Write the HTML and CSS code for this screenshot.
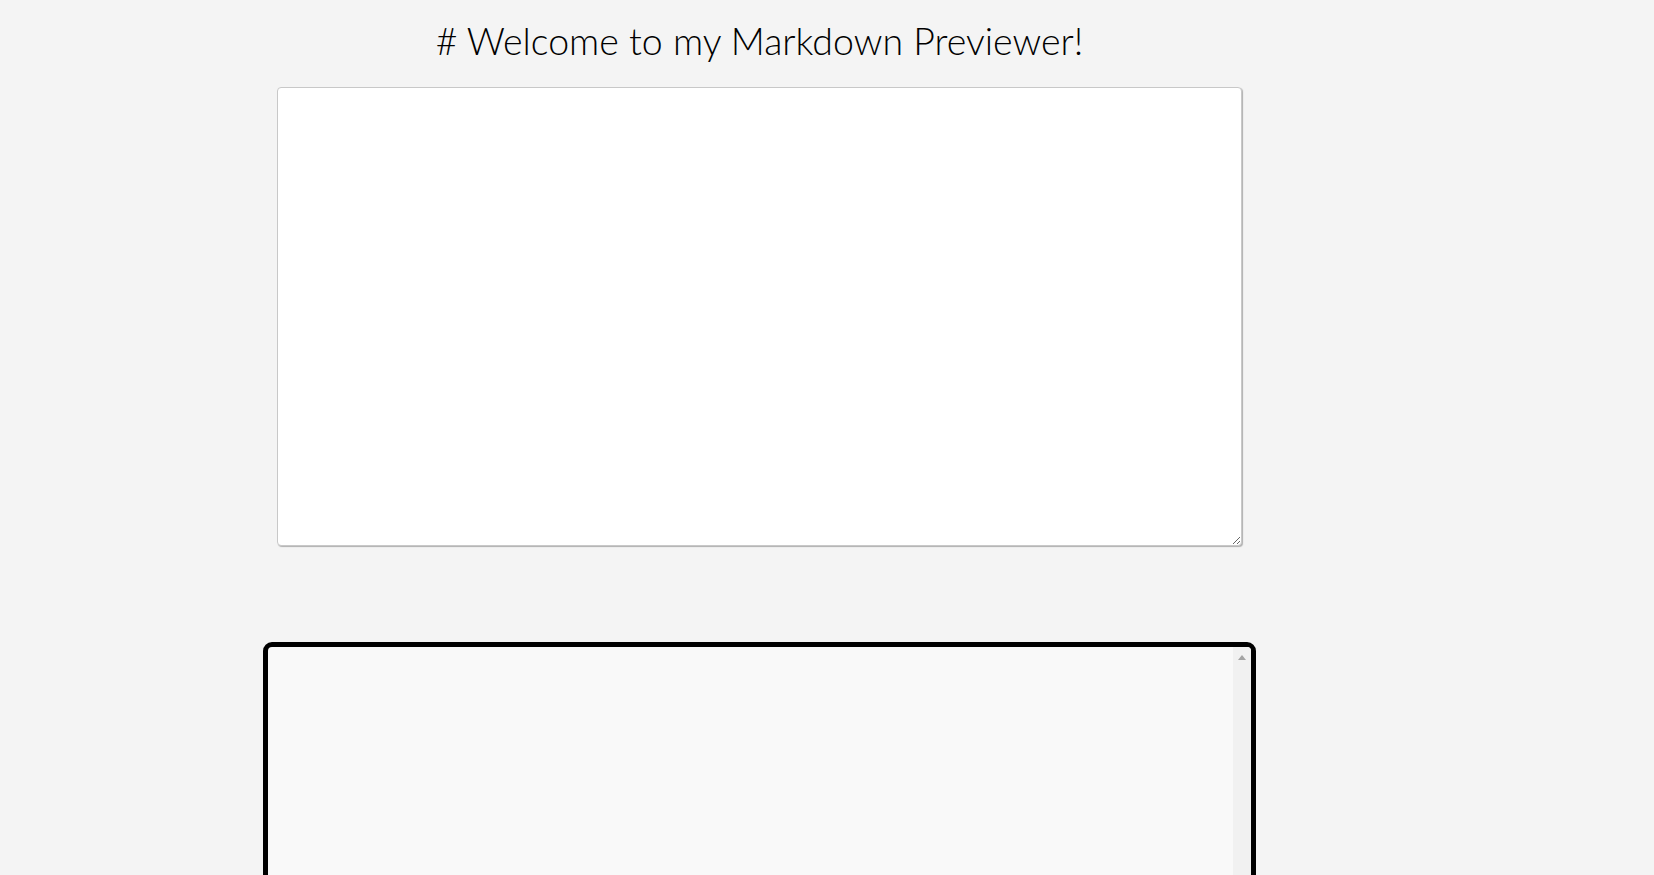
FILE: index.html
```html
<!DOCTYPE html>
<html lang="en">
<head>
<meta charset="utf-8">
<title>Markdown Previewer</title>
<link rel="stylesheet" href="styles.css">
</head>
<body>
<div class="wrap">
  <h1 class="title"># Welcome to my Markdown Previewer!</h1>
  <textarea class="editor" id="editor"></textarea>
  <div class="preview">
    <div class="preview-content" id="preview"></div>
    <div class="scrollbar"><span class="arrow-up"></span></div>
  </div>
</div>
</body>
</html>
```
FILE: styles.css
```css
html, body {
  margin: 0;
  padding: 0;
  background: #f4f4f4;
  overflow: hidden;
  height: 875px;
}
.wrap {
  width: 993px;
  margin-left: 263px;
  padding-top: 1px;
}
.title {
  font-family: Lato, "Liberation Sans", sans-serif;
  font-weight: 300;
  font-size: 37.5px;
  line-height: 48px;
  color: #000;
  text-align: center;
  margin: 16px 0 22px 0;
}
.editor {
  display: block;
  box-sizing: border-box;
  width: 965px;
  height: 459px;
  margin: 0 auto;
  background: #fff;
  border: 1px solid #c8c8c8;
  border-radius: 4px;
  box-shadow: 1px 1px 1px #b0b0b0;
  outline: none;
}
.preview {
  box-sizing: border-box;
  display: flex;
  margin-top: 96px;
  width: 993px;
  height: 500px;
  border: 5px solid #000;
  border-radius: 9px;
  background: #f9f9f9;
  overflow: hidden;
}
.preview-content {
  flex: 1;
}
.scrollbar {
  width: 18px;
  background: #f1f1f1;
  display: flex;
  justify-content: center;
  padding-top: 8px;
  box-sizing: border-box;
}
.arrow-up {
  width: 0;
  height: 0;
  border-left: 4.5px solid transparent;
  border-right: 4.5px solid transparent;
  border-bottom: 5px solid #a3a3a3;
}
```
